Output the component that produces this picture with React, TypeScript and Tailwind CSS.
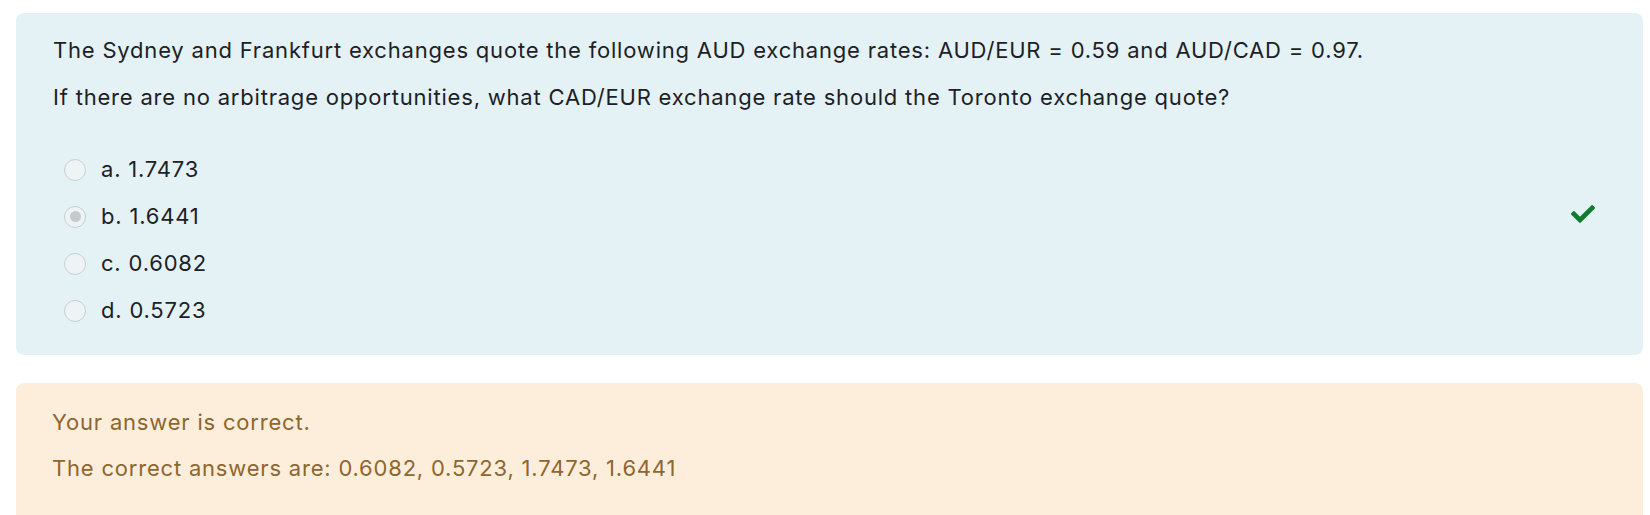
import React from 'react';

type Option = { label: string; value: string; checked?: boolean };

const options: Option[] = [
  { label: 'a.', value: '1.7473' },
  { label: 'b.', value: '1.6441', checked: true },
  { label: 'c.', value: '0.6082' },
  { label: 'd.', value: '0.5723' },
];

const CheckIcon: React.FC = () => (
  <svg viewBox="0 0 512 512" className="w-[24px] h-[24px] fill-[#0f7b2e]">
    <path d="M173.9 439.4l-166.4-166.4c-10-10-10-26.2 0-36.2l36.2-36.2c10-10 26.2-10 36.2 0L192 312.7 432.1 72.6c10-10 26.2-10 36.2 0l36.2 36.2c10 10 10 26.2 0 36.2l-294.4 294.4c-10 10-26.2 10-36.2 0z" />
  </svg>
);

const Radio: React.FC<{ checked?: boolean }> = ({ checked }) => (
  <span className="w-[22px] h-[22px] rounded-full border border-[#c9cfd2] bg-[#eef3f4] flex items-center justify-center shrink-0">
    {checked && <span className="w-[11px] h-[11px] rounded-full bg-[#c6cacc]" />}
  </span>
);

export default function App() {
  return (
    <div
      className="bg-white min-h-[515px] pt-[13px] pl-[16px] pr-[7px] text-[22px] leading-[33px] tracking-[0.8px]"
      style={{ fontFamily: 'Inter, "Noto Sans", "Liberation Sans", sans-serif' }}
    >
      <div className="bg-[#e4f1f5] rounded-[8px] pl-[37px] pr-[48px] pt-[21px] pb-[28px] text-[#1d2125]">
        <p className="mb-[14px]">
          The Sydney and Frankfurt exchanges quote the following AUD exchange rates: AUD/EUR = 0.59 and AUD/CAD = 0.97.
        </p>
        <p className="mb-[39px]">
          If there are no arbitrage opportunities, what CAD/EUR exchange rate should the Toronto exchange quote?
        </p>
        <div className="flex flex-col gap-[14px] pl-[11px]">
          {options.map((o) => (
            <div key={o.label} className="flex items-center">
              <Radio checked={o.checked} />
              <span className="ml-[15px]">
                {o.label} {o.value}
              </span>
              {o.checked && (
                <span className="ml-auto flex items-center pb-[6px]">
                  <CheckIcon />
                </span>
              )}
            </div>
          ))}
        </div>
      </div>
      <div className="mt-[28px] bg-[#fdeedb] rounded-t-[8px] pl-[36px] pt-[23px] pb-[40px] text-[#8e662e]">
        <p className="mb-[13px]">Your answer is correct.</p>
        <p>The correct answers are: 0.6082, 0.5723, 1.7473, 1.6441</p>
      </div>
    </div>
  );
}
